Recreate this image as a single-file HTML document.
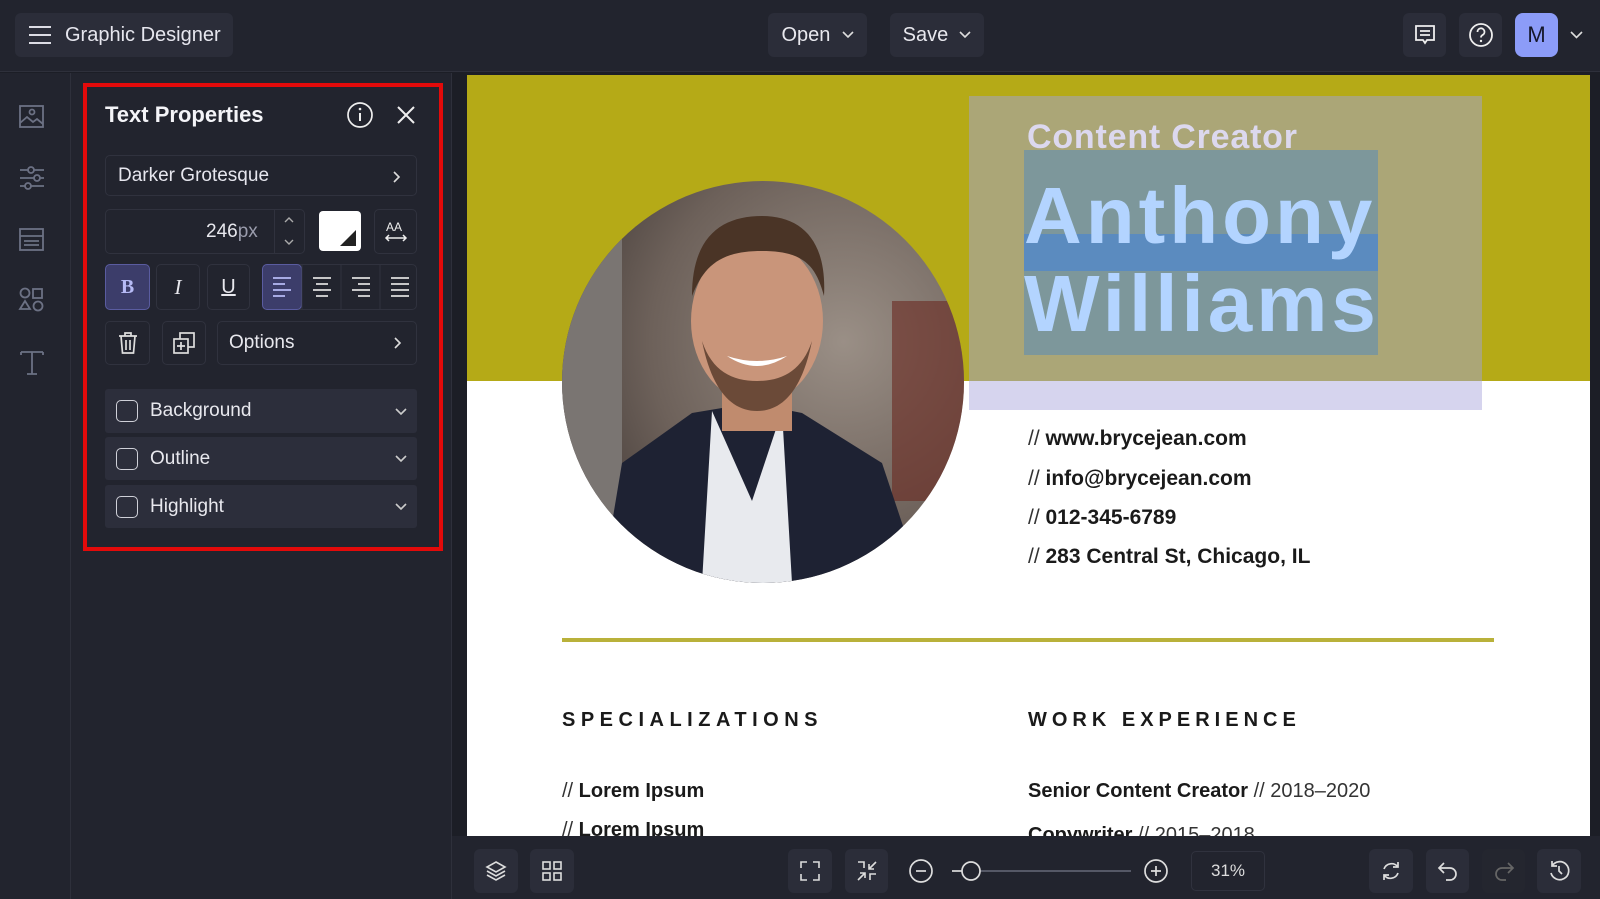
<!DOCTYPE html>
<html><head><meta charset="utf-8"><style>
*{box-sizing:border-box;margin:0;padding:0}
body{width:1600px;height:899px;overflow:hidden;background:#1c1e26;font-family:"Liberation Sans",sans-serif;color:#e8e8ee;position:relative}
.a{position:absolute}
.btn{position:absolute;background:#2b2d39;border-radius:6px;display:flex;align-items:center;justify-content:center}
.ob{position:absolute;border:1px solid #30323e;border-radius:5px;display:flex;align-items:center}
svg{display:block}
.cc{font-family:"Liberation Sans",sans-serif;font-weight:bold}
.ct{position:absolute;left:1028px;font-size:21px;color:#1a1a1a;font-weight:bold}
.ct i{font-style:normal;font-weight:normal;color:#333}
</style></head><body>
<div class="a" style="left:0;top:0;width:1600px;height:72px;background:#22242e;border-bottom:1px solid #2e303b"></div>
<div class="btn" style="left:15px;top:13px;width:218px;height:44px;justify-content:flex-start">
 <svg class="a" style="left:13px;top:12px" width="24" height="20"><path d="M1 2h22M1 10h22M1 18h22" stroke="#dcdce4" stroke-width="2"/></svg>
 <span class="a" style="left:50px;top:11px;font-size:20px;color:#e6e6ee">Graphic Designer</span></div>
<div class="btn" style="left:768px;top:13px;width:99px;height:44px;font-size:20px">Open&nbsp;&nbsp;<svg width="12" height="8"><path d="M1 1l5 5 5-5" stroke="#ddd" stroke-width="1.6" fill="none"/></svg></div>
<div class="btn" style="left:890px;top:13px;width:94px;height:44px;font-size:20px">Save&nbsp;&nbsp;<svg width="12" height="8"><path d="M1 1l5 5 5-5" stroke="#ddd" stroke-width="1.6" fill="none"/></svg></div>
<div class="btn" style="left:1403px;top:13px;width:43px;height:44px"><svg width="24" height="24"><path d="M3 3h18v14h-7l-2 3-2-3H3z" stroke="#eee" stroke-width="1.8" fill="none"/><path d="M7 8h10M7 12h10" stroke="#eee" stroke-width="1.8"/></svg></div>
<div class="btn" style="left:1459px;top:13px;width:43px;height:44px"><svg width="26" height="26"><circle cx="13" cy="13" r="11" stroke="#eee" stroke-width="1.8" fill="none"/><path d="M9.5 10a3.5 3.5 0 1 1 5 3c-1.3.7-1.5 1.3-1.5 2.5" stroke="#eee" stroke-width="1.8" fill="none"/><circle cx="13" cy="19" r="1.2" fill="#eee"/></svg></div>
<div class="btn" style="left:1515px;top:13px;width:43px;height:44px;background:#8c9cf8;border-radius:8px;color:#15172a;font-size:22px">M</div>
<svg class="a" style="left:1570px;top:31px" width="13" height="8"><path d="M1 1l5.5 5.5L12 1" stroke="#ddd" stroke-width="1.6" fill="none"/></svg>
<div class="a" style="left:0;top:73px;width:71px;height:826px;background:#22242e;border-right:1px solid #2e303b"></div>
<svg class="a" style="left:18px;top:103px" width="28" height="300" stroke="#6c7184" stroke-width="1.8" fill="none">
 <rect x="2" y="3" width="23" height="21"/><circle cx="14" cy="9" r="2.5"/><path d="M2 20l7-6 6 5 4-3 6 5"/>
 <path d="M2 67h24M2 75h24M2 83h24"/><circle cx="13" cy="67" r="3" fill="#22242e"/><circle cx="19" cy="75" r="3" fill="#22242e"/><circle cx="10" cy="83" r="3" fill="#22242e"/>
 <rect x="2" y="126" width="23" height="21"/><path d="M2 133h23M6 138h15M6 142h15"/>
 <circle cx="7" cy="190" r="4.5"/><rect x="15" y="186" width="9" height="9"/><path d="M7 198l5 8H2z"/><circle cx="20" cy="203" r="4.5"/>
 <path d="M3 249h22M14 249v22M9 271h10M3 249v3M25 249v3"/>
</svg>
<div class="a" style="left:71px;top:73px;width:381px;height:826px;background:#22242e;border-right:1px solid #2e303b"></div>
<div class="a" style="left:83px;top:83px;width:360px;height:468px;border:4px solid #e30a0a"></div>
<div class="a" style="left:105px;top:102px;font-size:22px;font-weight:bold;color:#f4f4f8">Text Properties</div>
<svg class="a" style="left:346px;top:101px" width="28" height="28"><circle cx="14" cy="14" r="12" stroke="#eee" stroke-width="1.7" fill="none"/><path d="M14 12v8" stroke="#eee" stroke-width="2"/><circle cx="14" cy="8" r="1.3" fill="#eee"/></svg>
<svg class="a" style="left:396px;top:105px" width="20" height="20"><path d="M2 2l16 16M18 2L2 18" stroke="#eee" stroke-width="2"/></svg>
<div class="ob" style="left:105px;top:155px;width:312px;height:41px;font-size:19px;padding-left:12px;color:#e6e6ee">Darker Grotesque<svg class="a" style="left:287px;top:15px" width="8" height="12"><path d="M1 1l5 5-5 5" stroke="#ddd" stroke-width="1.6" fill="none"/></svg></div>
<div class="ob" style="left:105px;top:209px;width:200px;height:45px;font-size:19px"><span class="a" style="left:100px;top:11px">246<span style="color:#9a9cac">px</span></span><div class="a" style="left:168px;top:0;width:1px;height:43px;background:#30323e"></div><svg class="a" style="left:177px;top:5px" width="12" height="32"><path d="M2 7l4-4 4 4M2 25l4 4 4-4" stroke="#aaa" stroke-width="1.4" fill="none"/></svg></div>
<div class="a" style="left:319px;top:211px;width:42px;height:40px;background:#fff;border-radius:4px"><svg class="a" style="left:20px;top:18px" width="18" height="18"><path d="M17 1v16H1z" fill="#222"/></svg></div>
<div class="ob" style="left:374px;top:209px;width:43px;height:45px;justify-content:center"><svg width="26" height="26"><text x="3" y="12" font-size="12" fill="#eee" font-family="Liberation Sans">AA</text><path d="M3 19h20M6 16l-3 3 3 3M20 16l3 3-3 3" stroke="#eee" stroke-width="1.5" fill="none"/></svg></div>
<div class="ob" style="left:105px;top:264px;width:45px;height:46px;justify-content:center;background:#3c3d6a;border-color:#5a5ca0;font-weight:bold;font-size:20px;color:#b6baf5;font-family:'Liberation Serif',serif">B</div>
<div class="ob" style="left:156px;top:264px;width:44px;height:46px;justify-content:center;font-size:21px;font-style:italic;font-family:'Liberation Serif',serif">I</div>
<div class="ob" style="left:207px;top:264px;width:43px;height:46px;justify-content:center;font-size:20px;text-decoration:underline">U</div>
<div class="ob" style="left:262px;top:264px;width:155px;height:46px"></div>
<div class="ob" style="left:262px;top:264px;width:40px;height:46px;background:#3c3d6a;border-color:#5a5ca0"></div>
<svg class="a" style="left:262px;top:264px" width="155" height="46" stroke-width="1.8">
 <path d="M11 14h18M11 20h12M11 26h18M11 32h12" stroke="#b6baf5"/>
 <path d="M51 14h18M54 20h12M51 26h18M54 32h12" stroke="#ddd"/>
 <path d="M90 14h18M96 20h12M90 26h18M96 32h12" stroke="#ddd"/>
 <path d="M129 14h18M129 20h18M129 26h18M129 32h18" stroke="#ddd"/>
 <path d="M40 0v46M79 0v46M118 0v46" stroke="#30323e" stroke-width="1"/>
</svg>
<div class="ob" style="left:105px;top:321px;width:45px;height:44px;justify-content:center"><svg width="22" height="24" stroke="#ddd" stroke-width="1.7" fill="none"><path d="M2 5h18M8 5V2h6v3M4 5l1.5 17h11L18 5M9 9v10M13 9v10"/></svg></div>
<div class="ob" style="left:162px;top:321px;width:44px;height:44px;justify-content:center"><svg width="24" height="24" stroke="#ddd" stroke-width="1.7" fill="none"><rect x="8" y="2" width="14" height="14"/><rect x="2" y="8" width="14" height="14" fill="#22242e"/><path d="M9 11v8M5 15h8"/></svg></div>
<div class="ob" style="left:217px;top:321px;width:200px;height:44px;font-size:19px;padding-left:11px">Options<svg class="a" style="left:176px;top:15px" width="8" height="12"><path d="M1 1l5 5-5 5" stroke="#ddd" stroke-width="1.6" fill="none"/></svg></div>
<div class="a" style="left:105px;top:389px;width:312px;height:44px;background:#2c2e3b;border-radius:3px"></div>
<div class="a" style="left:105px;top:437px;width:312px;height:43px;background:#2c2e3b;border-radius:3px"></div>
<div class="a" style="left:105px;top:485px;width:312px;height:43px;background:#2c2e3b;border-radius:3px"></div>
<div class="a" style="left:116px;top:400px;width:22px;height:22px;border:1.6px solid #cfd0d8;border-radius:5px"></div>
<div class="a" style="left:116px;top:448px;width:22px;height:22px;border:1.6px solid #cfd0d8;border-radius:5px"></div>
<div class="a" style="left:116px;top:496px;width:22px;height:22px;border:1.6px solid #cfd0d8;border-radius:5px"></div>
<div class="a" style="left:150px;top:400px;font-size:19px">Background</div>
<div class="a" style="left:150px;top:448px;font-size:19px">Outline</div>
<div class="a" style="left:150px;top:496px;font-size:19px">Highlight</div>
<svg class="a" style="left:395px;top:408px" width="12" height="110" stroke="#ccc" stroke-width="1.6" fill="none"><path d="M1 1l5 5 5-5M1 48l5 5 5-5M1 96l5 5 5-5"/></svg>
<div class="a" style="left:467px;top:75px;width:1123px;height:761px;background:#fff;overflow:hidden">
 <div class="a" style="left:0;top:0;width:1123px;height:306px;background:#b5aa17"></div>
 <div class="a" style="left:502px;top:21px;width:513px;height:285px;background:#aba677"></div>
 <div class="a" style="left:502px;top:306px;width:513px;height:29px;background:#d6d4ee"></div>
 <div class="a" style="left:557px;top:75px;width:354px;height:205px;background:#7d979b"></div>
 <div class="a" style="left:557px;top:159px;width:354px;height:37px;background:#5b8bbf"></div>
 <div class="a cc" style="left:560px;top:43px;font-size:34px;color:#dcd8ee;letter-spacing:0.8px">Content Creator</div>
 <div class="a cc" style="left:557px;top:97px;font-size:80px;line-height:88px;color:#b3d4ff;letter-spacing:4px">Anthony<br>Williams</div>
 <svg class="a" style="left:95px;top:106px" width="402" height="402">
  <defs><clipPath id="c"><circle cx="201" cy="201" r="201"/></clipPath>
  <radialGradient id="bg" cx="0.7" cy="0.4" r="0.8"><stop offset="0" stop-color="#9a8f86"/><stop offset="0.6" stop-color="#6d615a"/><stop offset="1" stop-color="#3e3633"/></radialGradient></defs>
  <g clip-path="url(#c)">
   <rect width="402" height="402" fill="url(#bg)"/>
   <rect x="0" y="0" width="60" height="402" fill="#7a7572"/>
   <rect x="330" y="120" width="72" height="200" fill="#6b2a22" opacity="0.6"/>
   <path d="M40 402l20-120 70-50 60-10 50 10 80 50 40 120z" fill="#1e2233"/>
   <path d="M150 230l40 90 30-90 10 172h-90z" fill="#e8eaee"/>
   <rect x="160" y="190" width="70" height="60" fill="#c08b6e"/>
   <ellipse cx="195" cy="140" rx="66" ry="82" fill="#c9957a"/>
   <path d="M130 115c0-60 30-80 70-80s65 25 62 80c-8-30-20-45-62-45s-58 15-70 45z" fill="#4a3426"/>
   <path d="M140 160c10 50 30 70 55 70s45-20 55-70c-10 30-30 40-55 40s-45-10-55-40z" fill="#6b4a38"/>
   <path d="M165 175q30 20 60 0q-30 10-60 0z" fill="#fff"/>
  </g>
 </svg>
 <div class="ct" style="top:352px;left:561px"><i>//</i> www.brycejean.com</div>
 <div class="ct" style="top:392px;left:561px"><i>//</i> info@brycejean.com</div>
 <div class="ct" style="top:431px;left:561px"><i>//</i> 012-345-6789</div>
 <div class="ct" style="top:470px;left:561px"><i>//</i> 283 Central St, Chicago, IL</div>
 <div class="a" style="left:95px;top:563px;width:932px;height:4px;background:#b9b13a"></div>
 <div class="a" style="left:95px;top:634px;font-size:20px;font-weight:bold;letter-spacing:5.5px;color:#1a1a1a">SPECIALIZATIONS</div>
 <div class="a" style="left:561px;top:634px;font-size:20px;font-weight:bold;letter-spacing:5px;color:#1a1a1a">WORK EXPERIENCE</div>
 <div class="ct" style="left:95px;top:705px;font-size:20px"><i>//</i> Lorem Ipsum</div>
 <div class="ct" style="left:95px;top:744px;font-size:20px"><i>//</i> Lorem Ipsum</div>
 <div class="ct" style="left:561px;top:705px;font-size:20px">Senior Content Creator <i>// 2018–2020</i></div>
 <div class="ct" style="left:561px;top:749px;font-size:20px">Copywriter <i>// 2015–2018</i></div>
</div>
<div class="a" style="left:452px;top:836px;width:1148px;height:63px;background:#22242e"></div>
<div class="btn" style="left:474px;top:849px;width:44px;height:44px"><svg width="24" height="24" stroke="#ddd" stroke-width="1.6" fill="none"><path d="M12 3l9 5-9 5-9-5z"/><path d="M3 12l9 5 9-5M3 16l9 5 9-5"/></svg></div>
<div class="btn" style="left:530px;top:849px;width:44px;height:44px"><svg width="22" height="22" stroke="#ddd" stroke-width="1.6" fill="none"><rect x="2" y="2" width="7" height="7"/><rect x="13" y="2" width="7" height="7"/><rect x="2" y="13" width="7" height="7"/><rect x="13" y="13" width="7" height="7"/></svg></div>
<div class="btn" style="left:788px;top:849px;width:44px;height:44px"><svg width="22" height="22" stroke="#ddd" stroke-width="1.6" fill="none"><path d="M2 8V2h6M14 2h6v6M20 14v6h-6M8 20H2v-6"/></svg></div>
<div class="btn" style="left:845px;top:849px;width:43px;height:44px"><svg width="22" height="22" stroke="#ddd" stroke-width="1.6" fill="none"><path d="M2 2h6v6M20 2l-7 7M13 4v5h5M2 20l7-7M4 13h5v5M20 14h-6v6"/></svg></div>
<svg class="a" style="left:908px;top:858px" width="270" height="26" stroke="#ddd" stroke-width="1.7" fill="none">
 <circle cx="13" cy="13" r="11"/><path d="M8 13h10"/>
 <path d="M63 13h160" stroke="#555866" stroke-width="2"/><path d="M44 13h12"/><circle cx="63" cy="13" r="9" fill="#22242e"/>
 <circle cx="248" cy="13" r="11"/><path d="M243 13h10M248 8v10"/>
</svg>
<div class="ob" style="left:1191px;top:851px;width:74px;height:40px;justify-content:center;font-size:17px;color:#ddd">31%</div>
<div class="btn" style="left:1369px;top:849px;width:44px;height:44px"><svg width="24" height="24" stroke="#ddd" stroke-width="1.7" fill="none"><path d="M19 8a8 8 0 0 0-14 2M5 16a8 8 0 0 0 14-2M19 3v5h-5M5 21v-5h5"/></svg></div>
<div class="btn" style="left:1426px;top:849px;width:43px;height:44px"><svg width="24" height="24" stroke="#ddd" stroke-width="1.7" fill="none"><path d="M8 4L3 9l5 5M3 9h11a6 6 0 0 1 0 12h-4"/></svg></div>
<div class="btn" style="left:1482px;top:849px;width:43px;height:44px;background:#24262f"><svg width="24" height="24" stroke="#666" stroke-width="1.7" fill="none"><path d="M16 4l5 5-5 5M21 9H10a6 6 0 0 0 0 12h4"/></svg></div>
<div class="btn" style="left:1537px;top:849px;width:44px;height:44px"><svg width="24" height="24" stroke="#ddd" stroke-width="1.7" fill="none"><path d="M5 7a9 9 0 1 1-1 7M5 2v5h5M12 7v5l3 3"/></svg></div>
</body></html>
